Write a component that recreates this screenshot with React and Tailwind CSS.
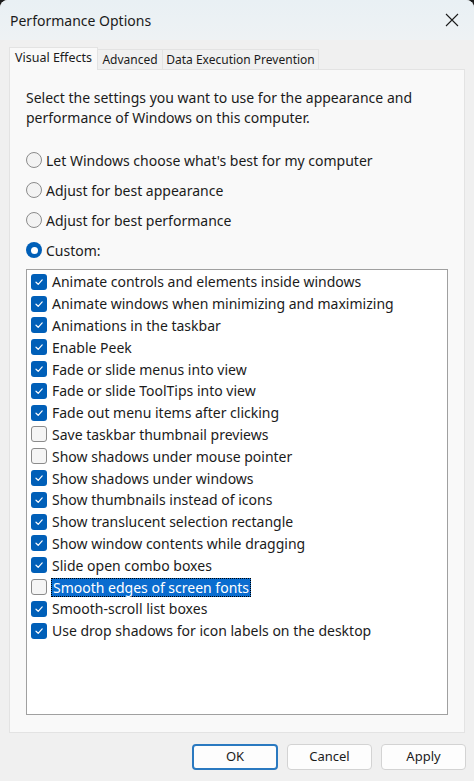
import React from 'react';

const FONT = { fontFamily: '"Segoe UI", "Noto Sans", sans-serif' };

const EFFECTS = [
    ['Animate controls and elements inside windows', true],
    ['Animate windows when minimizing and maximizing', true],
    ['Animations in the taskbar', true],
    ['Enable Peek', true],
    ['Fade or slide menus into view', true],
    ['Fade or slide ToolTips into view', true],
    ['Fade out menu items after clicking', true],
    ['Save taskbar thumbnail previews', false],
    ['Show shadows under mouse pointer', false],
    ['Show shadows under windows', true],
    ['Show thumbnails instead of icons', true],
    ['Show translucent selection rectangle', true],
    ['Show window contents while dragging', true],
    ['Slide open combo boxes', true],
    ['Smooth edges of screen fonts', false],
    ['Smooth-scroll list boxes', true],
    ['Use drop shadows for icon labels on the desktop', true],
];

const RADIOS = [
    ["Let Windows choose what's best for my computer", false],
    ['Adjust for best appearance', false],
    ['Adjust for best performance', false],
    ['Custom:', true],
];

const Radio = ({ on }) => (
    on ? (
        <span className="flex h-[16px] w-[16px] shrink-0 items-center justify-center rounded-full bg-[#005fb8]">
            <span className="h-[7px] w-[7px] rounded-full bg-white" />
        </span>
    ) : (
        <span className="h-[16px] w-[16px] shrink-0 rounded-full border border-[#8b8b8b] bg-[#f3f3f3]" />
    )
);

const Check = ({ on }) => (
    on ? (
        <span className="flex h-[16px] w-[16px] shrink-0 items-center justify-center rounded-[3px] bg-[#005fb8]">
            <svg width="10" height="10" viewBox="0 0 10 10" fill="none">
                <path d="M2 5.2 L4.2 7.3 L8.2 2.9" stroke="white" strokeWidth="1.2" strokeLinecap="round" strokeLinejoin="round" />
            </svg>
        </span>
    ) : (
        <span className="h-[16px] w-[16px] shrink-0 rounded-[3px] border border-[#8b8b8b] bg-[#f5f5f5]" />
    )
);

export default function App() {
    return (
        <div className="h-[781px] w-[474px] bg-[#1c1c1c] text-[#1b1b1b]" style={FONT}>
            <div className="flex h-full flex-col rounded-t-[8px] bg-[#f0f0f0] overflow-hidden">
                {/* Title bar */}
                <div className="flex h-[40px] shrink-0 items-center justify-between bg-gradient-to-b from-[#e9f0f4] to-[#eef2f4] pl-[10px] pr-[14px]">
                    <span className="text-[14px]">Performance Options</span>
                    <svg width="14" height="14" viewBox="0 0 14 14" className="mr-[1px]">
                        <path d="M1 1 L13 13 M13 1 L1 13" stroke="#1b1b1b" strokeWidth="1.1" />
                    </svg>
                </div>

                {/* Tabs */}
                <div className="mt-[7px] flex h-[22px] shrink-0 items-end whitespace-nowrap pl-[9px] text-[12px]">
                    <div className="relative z-10 -mb-px flex h-[23px] w-[89px] items-center justify-center border border-b-0 border-[#e3e3e3] bg-[#f9f9f9] pb-[2px] text-[12.5px]">
                        Visual Effects
                    </div>
                    <div className="flex h-[20px] w-[65px] items-center justify-center border border-l-0 border-b-0 border-[#e3e3e3] bg-[#f0f0f0]">
                        Advanced
                    </div>
                    <div className="flex h-[20px] w-[156px] items-center justify-center border border-l-0 border-b-0 border-[#e3e3e3] bg-[#f0f0f0]">
                        Data Execution Prevention
                    </div>
                </div>

                {/* Panel */}
                <div className="mx-[9px] flex h-[664px] shrink-0 flex-col border border-[#e3e3e3] bg-[#f9f9f9] px-[16px]">
                    <p className="mt-[18px] text-[14px] leading-[19.5px]">
                        Select the settings you want to use for the appearance and performance of Windows on this computer.
                    </p>
                    <div className="mt-[18px] flex flex-col">
                        {RADIOS.map(([label, on]) => (
                            <div key={label} className="flex h-[30px] items-center gap-[4px] text-[14px]">
                                <Radio on={on} />
                                <span>{label}</span>
                            </div>
                        ))}
                    </div>
                    <div className="mt-[4px] h-[446px] border border-[#a0a0a0] bg-white pt-[1px]">
                        {EFFECTS.map(([label, on]) => {
                            const selected = label === 'Smooth edges of screen fonts';
                            return (
                                <div key={label} className="flex h-[21.8px] items-center gap-[4px] pl-[4px] text-[14px]">
                                    <Check on={on} />
                                    <span
                                        className={selected
                                            ? 'border border-dotted border-[#000000] bg-[#0a6ccf] px-[1px] leading-[17px] text-white'
                                            : 'px-[1px]'}
                                    >
                                        {label}
                                    </span>
                                </div>
                            );
                        })}
                    </div>
                </div>

                {/* Buttons */}
                <div className="mt-[11px] flex justify-end gap-[9px] pr-[8px] text-[13px]">
                    <button className="h-[26px] w-[86px] rounded-[4px] border-2 border-[#2a79c0] bg-[#fdfdfd]">OK</button>
                    <button className="h-[26px] w-[85px] rounded-[4px] border border-[#d3d3d3] bg-[#fdfdfd]">Cancel</button>
                    <button className="h-[26px] w-[85px] rounded-[4px] border border-[#d3d3d3] bg-[#fdfdfd]">Apply</button>
                </div>
            </div>
        </div>
    );
}
